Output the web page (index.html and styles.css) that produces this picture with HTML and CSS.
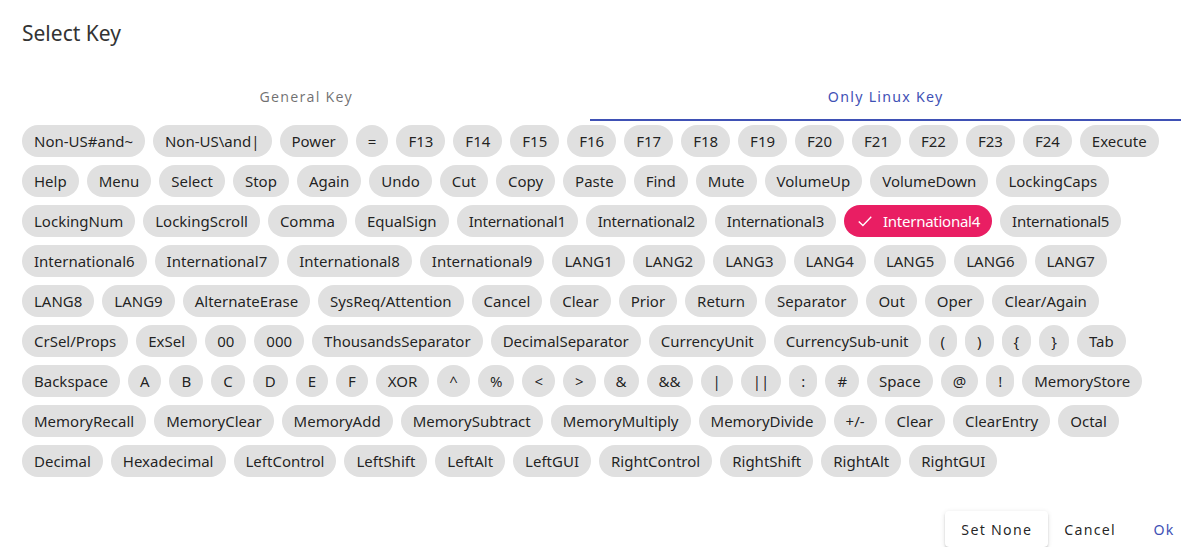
FILE: index.html
```html
<!DOCTYPE html>
<html lang="en">
<head>
<meta charset="utf-8">
<title>Select Key</title>
<link rel="stylesheet" href="styles.css">
</head>
<body>
<div class="dialog">
  <div class="title">Select Key</div>
  <div class="tabs">
    <div class="tab">General Key</div>
    <div class="tab active">Only Linux Key</div>
  </div>
  <div class="chips">
    <div class="row">
      <span class="chip">Non-US#and~</span><span class="chip">Non-US\and|</span><span class="chip">Power</span><span class="chip">=</span><span class="chip">F13</span><span class="chip">F14</span><span class="chip">F15</span><span class="chip">F16</span><span class="chip">F17</span><span class="chip">F18</span><span class="chip">F19</span><span class="chip">F20</span><span class="chip">F21</span><span class="chip">F22</span><span class="chip">F23</span><span class="chip">F24</span><span class="chip">Execute</span>
    </div>
    <div class="row">
      <span class="chip">Help</span><span class="chip">Menu</span><span class="chip">Select</span><span class="chip">Stop</span><span class="chip">Again</span><span class="chip">Undo</span><span class="chip">Cut</span><span class="chip">Copy</span><span class="chip">Paste</span><span class="chip">Find</span><span class="chip">Mute</span><span class="chip">VolumeUp</span><span class="chip">VolumeDown</span><span class="chip">LockingCaps</span>
    </div>
    <div class="row">
      <span class="chip">LockingNum</span><span class="chip">LockingScroll</span><span class="chip">Comma</span><span class="chip">EqualSign</span><span class="chip intl">International1</span><span class="chip intl">International2</span><span class="chip intl">International3</span><span class="chip intl selected"><svg class="check" viewBox="0 0 24 24" width="20" height="20"><path d="M4.5 12.5 L9.5 17.5 L19.5 7" fill="none" stroke="#fff" stroke-width="1.6"/></svg>International4</span><span class="chip intl">International5</span>
    </div>
    <div class="row">
      <span class="chip">International6</span><span class="chip">International7</span><span class="chip">International8</span><span class="chip">International9</span><span class="chip">LANG1</span><span class="chip">LANG2</span><span class="chip">LANG3</span><span class="chip">LANG4</span><span class="chip">LANG5</span><span class="chip">LANG6</span><span class="chip">LANG7</span>
    </div>
    <div class="row">
      <span class="chip">LANG8</span><span class="chip">LANG9</span><span class="chip">AlternateErase</span><span class="chip">SysReq/Attention</span><span class="chip">Cancel</span><span class="chip">Clear</span><span class="chip">Prior</span><span class="chip">Return</span><span class="chip">Separator</span><span class="chip">Out</span><span class="chip">Oper</span><span class="chip">Clear/Again</span>
    </div>
    <div class="row">
      <span class="chip">CrSel/Props</span><span class="chip">ExSel</span><span class="chip">00</span><span class="chip">000</span><span class="chip">ThousandsSeparator</span><span class="chip">DecimalSeparator</span><span class="chip">CurrencyUnit</span><span class="chip">CurrencySub-unit</span><span class="chip">(</span><span class="chip">)</span><span class="chip">{</span><span class="chip">}</span><span class="chip">Tab</span>
    </div>
    <div class="row">
      <span class="chip">Backspace</span><span class="chip">A</span><span class="chip">B</span><span class="chip">C</span><span class="chip">D</span><span class="chip">E</span><span class="chip">F</span><span class="chip">XOR</span><span class="chip">^</span><span class="chip">%</span><span class="chip">&lt;</span><span class="chip">&gt;</span><span class="chip">&amp;</span><span class="chip">&amp;&amp;</span><span class="chip">|</span><span class="chip">||</span><span class="chip">:</span><span class="chip">#</span><span class="chip">Space</span><span class="chip">@</span><span class="chip">!</span><span class="chip">MemoryStore</span>
    </div>
    <div class="row">
      <span class="chip">MemoryRecall</span><span class="chip">MemoryClear</span><span class="chip">MemoryAdd</span><span class="chip">MemorySubtract</span><span class="chip">MemoryMultiply</span><span class="chip">MemoryDivide</span><span class="chip">+/-</span><span class="chip">Clear</span><span class="chip">ClearEntry</span><span class="chip">Octal</span>
    </div>
    <div class="row">
      <span class="chip">Decimal</span><span class="chip">Hexadecimal</span><span class="chip">LeftControl</span><span class="chip">LeftShift</span><span class="chip">LeftAlt</span><span class="chip">LeftGUI</span><span class="chip">RightControl</span><span class="chip">RightShift</span><span class="chip">RightAlt</span><span class="chip">RightGUI</span>
    </div>
  </div>
  <div class="actions">
    <button class="btn raised">Set None</button>
    <button class="btn">Cancel</button>
    <button class="btn primary">Ok</button>
  </div>
</div>
</body>
</html>
```

FILE: styles.css
```css
html, body {
  margin: 0;
  padding: 0;
  background: #ffffff;
}
body {
  font-family: "Noto Sans", "Open Sans", sans-serif;
  color: rgba(0, 0, 0, 0.87);
  overflow: hidden;
}
.dialog {
  width: 1200px;
  height: 547px;
  display: flex;
  flex-direction: column;
}
.title {
  padding: 17px 22px 0 22px;
  height: 59px;
  font-size: 21px;
  line-height: 32px;
  color: #333333;
}
.tabs {
  display: flex;
  height: 48px;
  margin: 0 19px 0 22px;
}
.tab {
  flex: 1 0 auto;
  padding: 0 16px;
  display: flex;
  align-items: center;
  justify-content: center;
  font-size: 14.2px;
  letter-spacing: 0.0892857em;
  color: rgba(0, 0, 0, 0.56);
  border-bottom: 2px solid transparent;
  box-sizing: border-box;
}
.tab.active {
  color: #3f51b5;
  border-bottom-color: #3f51b5;
}
.chips {
  padding: 4px 19px 0 22px;
  display: flex;
  flex-direction: column;
  gap: 8px;
}
.row {
  display: flex;
  gap: 8px;
  white-space: nowrap;
}
.chip {
  display: inline-flex;
  align-items: center;
  height: 32px;
  padding: 0 12px;
  border-radius: 16px;
  background: #e0e0e0;
  font-size: 15px;
  color: rgba(0, 0, 0, 0.87);
  box-sizing: border-box;
}
.chip.intl {
  letter-spacing: -0.25px;
}
.chip.selected {
  background: #e91e63;
  color: #ffffff;
}
.check {
  margin: 0 8px 0 -1px;
}
.actions {
  margin-top: 34px;
  display: flex;
  justify-content: flex-end;
  padding-right: 4px;
}
.btn {
  font-family: inherit;
  font-size: 14.2px;
  letter-spacing: 0.0892857em;
  height: 36px;
  min-width: 64px;
  padding: 0 16px;
  border: none;
  background: transparent;
  color: rgba(0, 0, 0, 0.87);
  border-radius: 4px;
}
.btn.raised {
  background: #ffffff;
  box-shadow: 0 3px 1px -2px rgba(0,0,0,.2), 0 2px 2px 0 rgba(0,0,0,.14), 0 1px 5px 0 rgba(0,0,0,.12);
}
.btn.primary {
  color: #3f51b5;
}
```
